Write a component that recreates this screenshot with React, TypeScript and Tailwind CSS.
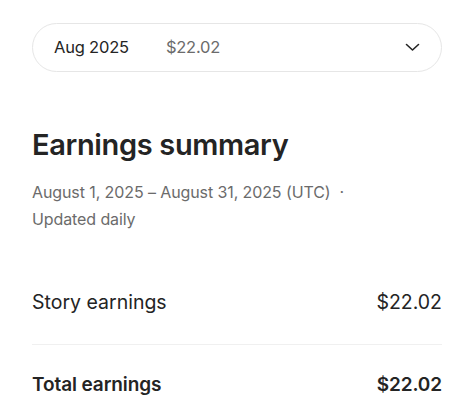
import React from "react";

export default function App() {
  return (
    <div className="w-[474px] h-[414px] bg-white px-8 pt-[23px] text-[#242424]" style={{ fontFamily: "Inter, 'Liberation Sans', sans-serif" }}>
      <div className="h-[49px] rounded-full border border-[#e6e6e6] flex items-center pl-[21px] pr-[21px]">
        <span className="text-[16.5px] tracking-[-0.2px] text-[#242424]">Aug 2025</span>
        <span className="ml-[37px] text-[16.5px] tracking-[-0.2px] text-[#6b6b6b]">$22.02</span>
        <svg className="ml-auto" width="15" height="9" viewBox="0 0 15 9" fill="none">
          <path d="M1.5 1.5 L7.5 7 L13.5 1.5" stroke="#242424" strokeWidth="1.6" strokeLinecap="round" strokeLinejoin="round" />
        </svg>
      </div>

      <h1 className="mt-[55px] text-[29px] leading-[36px] font-semibold tracking-[-0.35px]">Earnings summary</h1>

      <div className="mt-[16px] text-[16px] leading-[27px] text-[#6b6b6b] tracking-[-0.1px]">
        <div>
          August 1, 2025 – August 31, 2025 (UTC)<span className="ml-[9px]">·</span>
        </div>
        <div>Updated daily</div>
      </div>

      <div className="mt-[55px] flex justify-between items-center text-[19.5px] leading-[28px]">
        <span>Story earnings</span>
        <span>$22.02</span>
      </div>
      <div className="mt-[28px] h-px bg-[#f0f0f0]" />
      <div className="mt-[26px] flex justify-between items-center text-[19px] font-semibold tracking-[-0.1px] leading-[28px]">
        <span>Total earnings</span>
        <span>$22.02</span>
      </div>
    </div>
  );
}
